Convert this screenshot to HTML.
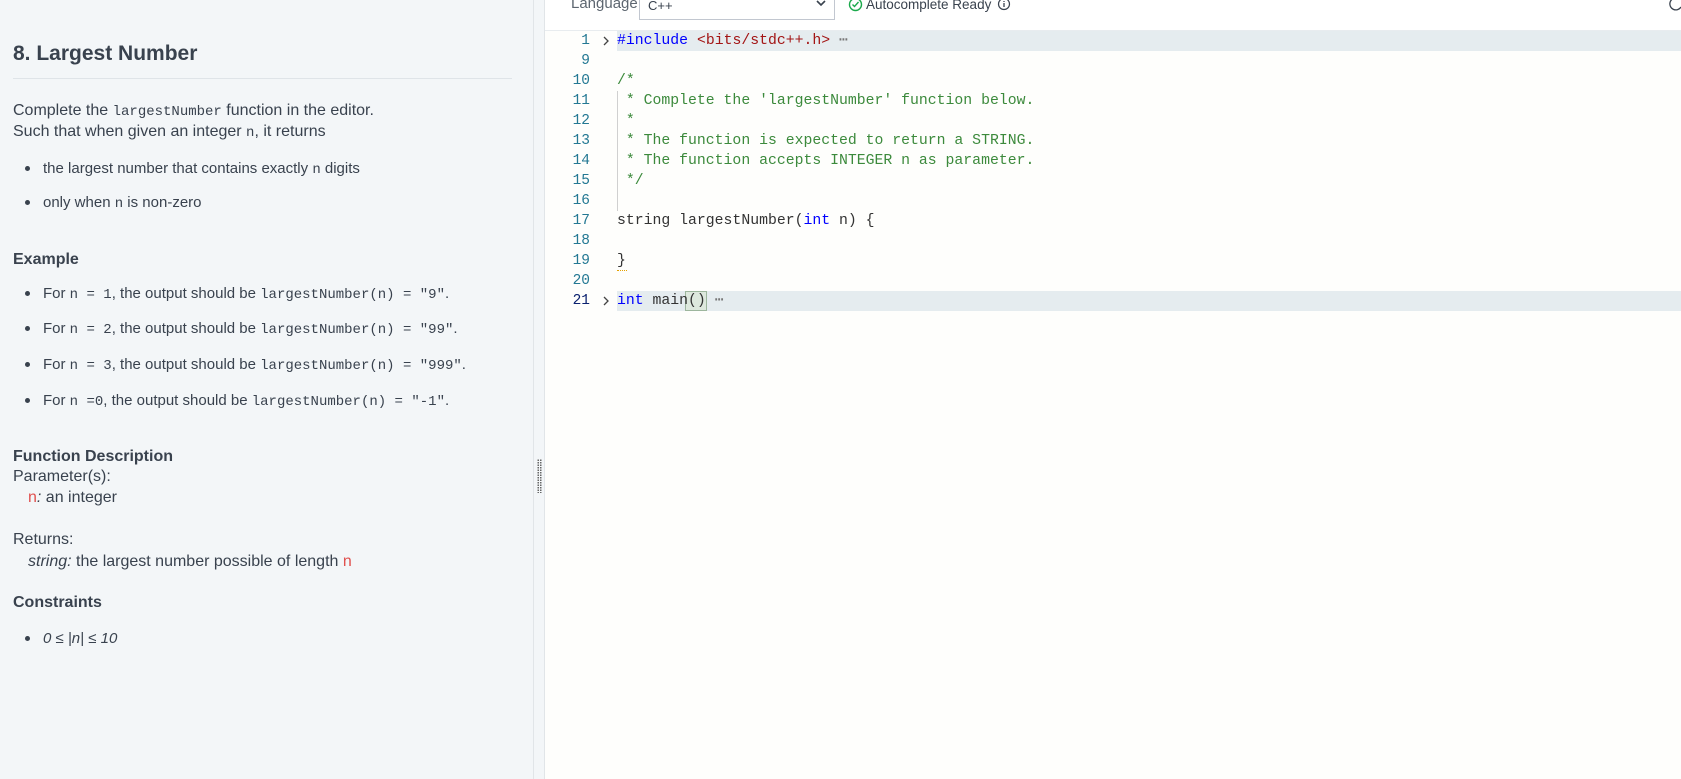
<!DOCTYPE html>
<html><head><meta charset="utf-8"><style>
*{margin:0;padding:0;box-sizing:border-box}
body{width:1681px;height:779px;overflow:hidden;background:#fff;font-family:"Liberation Sans",sans-serif;position:relative}
.left{position:absolute;left:0;top:0;width:533px;height:779px;background:#f3f6f8}
.split{position:absolute;left:533px;top:0;width:12px;height:779px;background:#f3f6f8;border-left:1px solid #e1e5e8;border-right:1px solid #e1e5e8}
.grip{position:absolute;left:537px;top:459px;width:5px;height:34px;background-image:radial-gradient(circle,#666 0.9px,transparent 1px);background-size:2.5px 2.5px}
.t{position:absolute;left:13px;color:#39424e;font-size:16px;white-space:nowrap;line-height:19px}
.s{font-size:15px}
.m{font-family:"Liberation Mono",monospace;font-size:14px;color:#39424e}
.b{font-weight:bold}
.red{color:#e0504e}
.dot{position:absolute;left:25px;width:5px;height:5px;border-radius:50%;background:#39424e}
.code{position:absolute;font-family:"Liberation Mono",monospace;font-size:14.8px;line-height:20px;white-space:pre;color:#333}
.ln{position:absolute;width:40px;text-align:right;left:550px;font-family:"Liberation Mono",monospace;font-size:14.5px;color:#237893}
.hl{position:absolute;left:617px;right:0;height:20px;background:#e5ecef}
.cm{color:#3c8a3c}.kw{color:#0000ff}.st{color:#a31515}
</style></head><body>
<div class="left"></div>
<div class="split"></div><div class="grip"></div>

<div class="t b" style="top:42px;font-size:21px;line-height:24px">8. Largest Number</div>
<div style="position:absolute;left:13px;top:78px;width:499px;height:1px;background:#dfe4e8"></div>
<div class="t" style="top:101px">Complete the <span class="m">largestNumber</span> function in the editor.</div>
<div class="t" style="top:122px">Such that when given an integer <span class="m">n</span>, it returns</div>
<div class="dot" style="top:166px"></div><div class="t s" style="left:43px;top:159px">the largest number that contains exactly <span class="m">n</span> digits</div>
<div class="dot" style="top:200px"></div><div class="t s" style="left:43px;top:193px">only when <span class="m">n</span> is non-zero</div>
<div class="t b" style="top:250px">Example</div>
<div class="dot" style="top:291px"></div><div class="t s" style="left:43px;top:284px">For <span class="m">n = 1</span>, the output should be <span class="m">largestNumber(n) = "9"</span>.</div>
<div class="dot" style="top:326px"></div><div class="t s" style="left:43px;top:319px">For <span class="m">n = 2</span>, the output should be <span class="m">largestNumber(n) = "99"</span>.</div>
<div class="dot" style="top:362px"></div><div class="t s" style="left:43px;top:355px">For <span class="m">n = 3</span>, the output should be <span class="m">largestNumber(n) = "999"</span>.</div>
<div class="dot" style="top:398px"></div><div class="t s" style="left:43px;top:391px">For <span class="m">n =0</span>, the output should be <span class="m">largestNumber(n) = "-1"</span>.</div>
<div class="t b" style="top:447px">Function Description</div>
<div class="t" style="top:467px">Parameter(s):</div>
<div class="t" style="left:28px;top:488px"><span class="red">n</span><i>:</i> an integer</div>
<div class="t" style="top:530px">Returns:</div>
<div class="t" style="left:28px;top:552px"><i>string:</i> the largest number possible of length <span class="red">n</span></div>
<div class="t b" style="top:593px">Constraints</div>
<div class="dot" style="top:636px"></div><div class="t s" style="left:43px;top:629px"><i>0 ≤ |n| ≤ 10</i></div>

<!-- toolbar -->
<div style="position:absolute;left:545px;top:30px;right:0;height:1px;background:#e8ecef"></div>
<div class="t" style="left:571px;top:-6px;color:#5d6670;font-size:15px">Language</div>
<div style="position:absolute;left:639px;top:-4px;width:196px;height:24px;border:1px solid #c2c7d0;background:#fff"></div>
<div class="t" style="left:648px;top:-4px;font-size:13px;color:#39424e">C++</div>
<svg style="position:absolute;left:815px;top:0" width="12" height="8" viewBox="0 0 12 8"><path d="M2 1l4 4 4-4" stroke="#39424e" stroke-width="1.6" fill="none"/></svg>
<svg style="position:absolute;left:848px;top:-3px" width="15" height="15" viewBox="0 0 15 15"><circle cx="7.5" cy="7.5" r="6" stroke="#1ba94c" stroke-width="1.4" fill="none"/><path d="M4.5 7.5l2 2 4-4.5" stroke="#1ba94c" stroke-width="1.4" fill="none"/></svg>
<div class="t" style="left:866px;top:-5px;font-size:13.5px;color:#39424e">Autocomplete Ready</div>
<svg style="position:absolute;left:997px;top:-3px" width="14" height="14" viewBox="0 0 14 14"><circle cx="7" cy="7" r="5.5" stroke="#39424e" stroke-width="1.2" fill="none"/><path d="M7 6v4M7 4v1" stroke="#39424e" stroke-width="1.3"/></svg>
<svg style="position:absolute;left:1667px;top:-3px" width="14" height="14" viewBox="0 0 14 14"><path d="M10 1a6 6 0 1 0 4 9" stroke="#39424e" stroke-width="1.3" fill="none"/></svg>

<!-- editor -->
<div style="position:absolute;left:545px;top:31px;right:0;bottom:0;background:#fefefc"></div>
<div class="hl" style="top:31px"></div>
<div class="hl" style="top:291px"></div>
<div style="position:absolute;left:617px;top:91px;width:1px;height:120px;background:#d0d0d0"></div>
<div style="position:absolute;left:685px;top:291px;width:22px;height:20px;border:1px solid #9db69d;background:#dde8dd"></div>

<div class="ln" style="top:31px;line-height:20px">1</div>
<div class="ln" style="top:51px;line-height:20px">9</div>
<div class="ln" style="top:71px;line-height:20px">10</div>
<div class="ln" style="top:91px;line-height:20px">11</div>
<div class="ln" style="top:111px;line-height:20px">12</div>
<div class="ln" style="top:131px;line-height:20px">13</div>
<div class="ln" style="top:151px;line-height:20px">14</div>
<div class="ln" style="top:171px;line-height:20px">15</div>
<div class="ln" style="top:191px;line-height:20px">16</div>
<div class="ln" style="top:211px;line-height:20px">17</div>
<div class="ln" style="top:231px;line-height:20px">18</div>
<div class="ln" style="top:251px;line-height:20px">19</div>
<div class="ln" style="top:271px;line-height:20px">20</div>
<div class="ln" style="top:291px;line-height:20px;color:#0b216f">21</div>
<svg style="position:absolute;left:601px;top:35px" width="10" height="12" viewBox="0 0 10 12"><path d="M3 2l4 4-4 4" stroke="#444" stroke-width="1.3" fill="none"/></svg>
<svg style="position:absolute;left:601px;top:295px" width="10" height="12" viewBox="0 0 10 12"><path d="M3 2l4 4-4 4" stroke="#444" stroke-width="1.3" fill="none"/></svg>

<div class="code" style="left:617px;top:31px"><span class="kw">#include</span> <span class="st">&lt;bits/stdc++.h&gt;</span><span style="color:#777"> ⋯</span>

<span class="cm">/*</span>
<span class="cm"> * Complete the 'largestNumber' function below.</span>
<span class="cm"> *</span>
<span class="cm"> * The function is expected to return a STRING.</span>
<span class="cm"> * The function accepts INTEGER n as parameter.</span>
<span class="cm"> */</span>

string largestNumber(<span class="kw">int</span> n) {

}

<span class="kw">int</span> main()<span style="color:#777"> ⋯</span></div>
<div style="position:absolute;left:617px;top:268px;width:10px;height:3px;border-bottom:1.5px dotted #e5a100"></div>
</body></html>
